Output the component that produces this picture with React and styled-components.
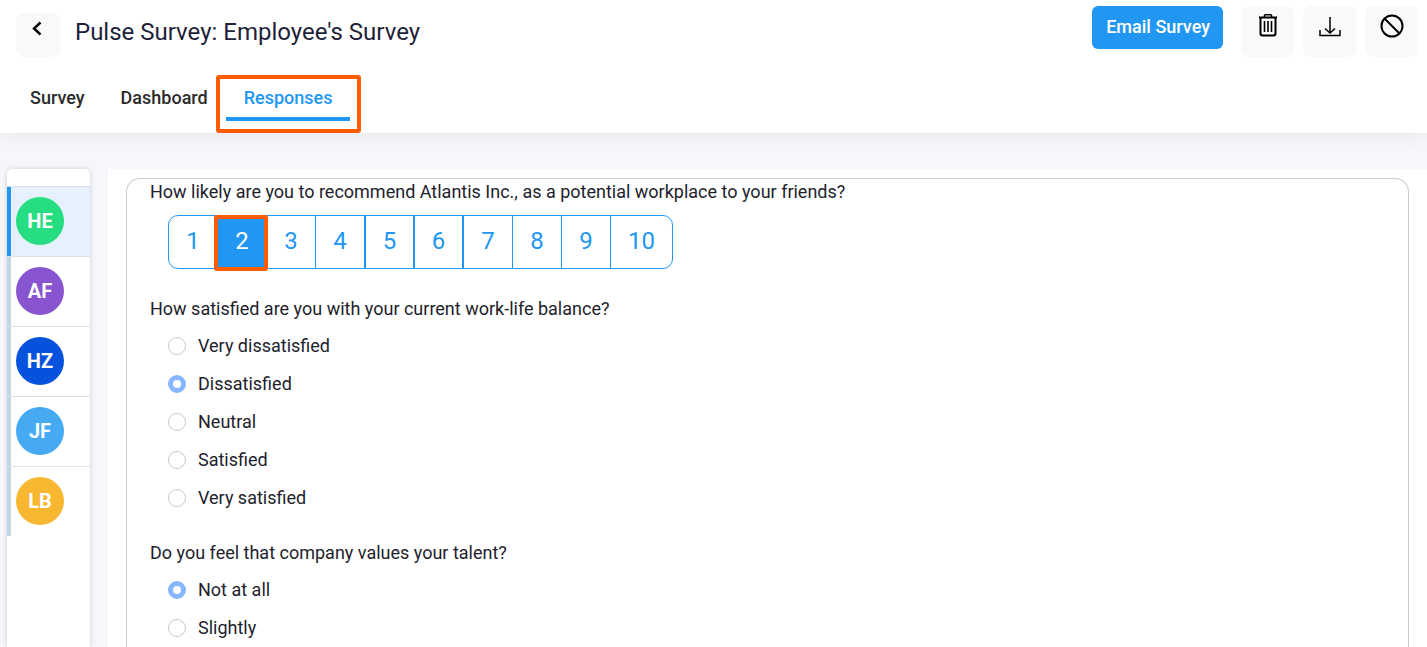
import React, { useState } from 'react';
import styled, { createGlobalStyle } from 'styled-components';

const GlobalStyle = createGlobalStyle`
  * {
    box-sizing: border-box;
  }
  body {
    margin: 0;
    font-family: Roboto, 'Liberation Sans', sans-serif;
    font-size: 18px;
    color: #1e1e2d;
    background-color: #f6f7fb;
  }
  button {
    font-family: inherit;
    border: 0;
    padding: 0;
    cursor: pointer;
  }
`

const Styles = {
  Page: styled.div`
    display: flex;
    flex-direction: column;
    height: 100vh;
    overflow: hidden;
  `,
  Header: styled.header`
    position: relative;
    flex: none;
    background-color: #fff;
    box-shadow: 0 4px 14px rgba(60, 66, 87, 0.07);
  `,
  TitleRow: styled.div`
    display: flex;
    align-items: flex-start;
    padding: 6px 9px 0 16px;
    h1 {
      flex: 1;
      margin: 12px 0 0 15px;
      font-size: 24px;
      line-height: 28px;
      font-weight: 400;
      color: #1f1f3a;
    }
  `,
  BackButton: styled.button`
    display: flex;
    justify-content: center;
    width: 44px;
    height: 44px;
    margin-top: 7px;
    padding: 8px 2px 0 0;
    border-radius: 8px;
    background-color: #f8f9fb;
  `,
  Actions: styled.div`
    display: flex;
    align-items: flex-start;
    gap: 9px;
  `,
  EmailButton: styled.button`
    height: 43px;
    margin-right: 9px;
    padding: 0 13px 2px 14px;
    border-radius: 6px;
    font-size: 18px;
    font-weight: 500;
    color: #fff;
    background-color: #2196f3;
  `,
  IconButton: styled.button`
    display: flex;
    justify-content: center;
    width: 53px;
    height: 51px;
    padding: 8px 0 0 1px;
    border-radius: 8px;
    background-color: #f8f9fb;
  `,
  Tabs: styled.nav`
    display: flex;
    padding: 27px 12px 12px;
  `,
  Tab: styled.a`
    position: relative;
    padding: 0 18px 5px;
    border-bottom: 4px solid ${({ $active }) => ($active ? '#2196f3' : 'transparent')};
    line-height: 28px;
    font-weight: 500;
    text-decoration: none;
    color: ${({ $active }) => ($active ? '#2196f3' : '#2b2b2b')};
  `,
  // orange frame drawn around the element to look at
  Highlight: styled.span`
    position: absolute;
    inset: ${({ $inset }) => $inset};
    z-index: 1;
    border: 4px solid #ff5c00;
    border-radius: 3px;
    pointer-events: none;
  `,
  Body: styled.div`
    display: flex;
    flex: 1;
    min-height: 0;
    gap: 18px;
    padding: 36px 0 0 7px;
  `,
  People: styled.aside`
    flex: none;
    width: 83px;
    padding-top: 17px;
    border-radius: 5px 5px 0 0;
    background-color: #fff;
    box-shadow: 0 0 4px rgba(60, 66, 87, 0.25);
  `,
  Person: styled.button`
    display: flex;
    align-items: flex-start;
    width: 100%;
    height: 70px;
    padding: 10px 0 0 9px;
    border-top: 1px solid #d9e2ea;
    background: linear-gradient(${({ $active }) => ($active ? '#2196f3, #2196f3' : '#bfd5e8, #bfd5e8')}) left / 4px 100% no-repeat;
    background-color: ${({ $active }) => ($active ? '#e7f1fe' : '#fff')};
  `,
  Avatar: styled.span`
    width: 48px;
    height: 48px;
    border-radius: 50%;
    font-size: 20px;
    line-height: 48px;
    font-weight: 700;
    text-align: center;
    color: #fff;
    background-color: ${({ $color }) => $color};
  `,
  Panel: styled.main`
    flex: 1;
    min-width: 0;
    padding: 9px 18px 0;
    background-color: #fff;
  `,
  Card: styled.div`
    height: 100%;
    padding: 0 23px;
    border: 1px solid #ccc;
    border-bottom: 0;
    border-radius: 14px 14px 0 0;
    overflow: hidden;
  `,
  Question: styled.section`
    margin-bottom: 24px;
    h2 {
      margin: 0;
      font-size: 18px;
      line-height: 26px;
      font-weight: 400;
    }
  `,
  Rating: styled.div`
    display: grid;
    grid-template-columns: 48fr repeat(5, 49fr) 50fr 49fr 49fr 62fr;
    max-width: 505px;
    height: 54px;
    margin: 10px 0 27px 18px;
    border: 1px solid #2196f3;
    border-radius: 10px;
  `,
  Score: styled.button`
    position: relative;
    padding-bottom: 2px;
    border-left: ${({ $line }) => $line}px solid #2196f3;
    border-radius: ${({ $line }) => ($line ? 0 : '9px 0 0 9px')};
    font-size: 24px;
    color: ${({ $active }) => ($active ? '#fff' : '#2196f3')};
    background-color: ${({ $active }) => ($active ? '#2196f3' : 'transparent')};
  `,
  Options: styled.div`
    margin-top: 4px;
  `,
  Option: styled.label`
    display: flex;
    align-items: center;
    gap: 12px;
    height: 38px;
    padding-left: 18px;
    cursor: pointer;
    input {
      appearance: none;
      width: 18px;
      height: 18px;
      margin: 1px 0 0;
      border: 1px solid #c8c8c8;
      border-radius: 50%;
      background-color: #fff;
    }
    input:checked {
      border: 5px solid #86b7fe;
    }
  `
}

const people = [
  { initials: 'HE', color: '#26de81' },
  { initials: 'AF', color: '#8854d0' },
  { initials: 'HZ', color: '#0652dd' },
  { initials: 'JF', color: '#45aaf2' },
  { initials: 'LB', color: '#f7b731' }
]

const tabs = ['Survey', 'Dashboard', 'Responses']
const scores = [1, 2, 3, 4, 5, 6, 7, 8, 9, 10]

const dividerWidth = (score) => {
  if (score === 1) {
    return 0
  }
  return score > 4 && score < 8 ? 2 : 1
}

// icons
const ChevronIcon = () => (
  <svg width='16' height='16' viewBox='0 0 16 16' fill='none' stroke='#000' strokeWidth='2.4'>
    <path d='M11.5 1.5L5 7.5l6.5 6' />
  </svg>
)

const TrashIcon = () => (
  <svg width='22' height='24' viewBox='0 0 22 24' fill='none' stroke='#000'>
    <path d='M2 3.5h18' strokeWidth='2' />
    <path d='M7.5 3V1.5q0-.7.7-.7h5.600q.7 0 .7.7V3' strokeWidth='1.6' />
    <path d='M3.500 4v15.500q0 2 2 2h11q2 0 2-2V4' strokeWidth='2' />
    <path d='M7.500 7v11M11 7v11M14.500 7v11' strokeWidth='1.6' />
  </svg>
)

const DownloadIcon = () => (
  <svg width='24' height='24' viewBox='0 0 24 24' fill='none' stroke='#000' strokeWidth='1.5'>
    <path d='M12 3v16M7 14.500l5 4.500 5-4.500' />
    <path d='M2 16v5.500h20V16' />
  </svg>
)

const BanIcon = () => (
  <svg width='24' height='24' viewBox='0 0 24 24' fill='none' stroke='#000' strokeWidth='2'>
    <circle cx='12' cy='12' r='10.500' />
    <path d='M4.500 4.500l15 15' />
  </svg>
)

const ChoiceQuestion = ({ id, title, options, initial }) => {
  const [value, setValue] = useState(initial)

  return (
    <Styles.Question role='radiogroup' aria-labelledby={id}>
      <h2 id={id}>{title}</h2>
      <Styles.Options>
        {options.map((option) => (
          <Styles.Option key={option}>
            <input
              type='radio'
              name={id}
              checked={value === option}
              onChange={() => setValue(option)} />
            {option}
          </Styles.Option>
        ))}
      </Styles.Options>
    </Styles.Question>
  )
}

const App = () => {
  const [person, setPerson] = useState('HE')
  const [score, setScore] = useState(2)

  return (
    <Styles.Page>
      <GlobalStyle />
      <Styles.Header>
        <Styles.TitleRow>
          <Styles.BackButton type='button' aria-label='Back'><ChevronIcon /></Styles.BackButton>
          <h1>Pulse Survey: Employee's Survey</h1>
          <Styles.Actions>
            <Styles.EmailButton type='button'>Email Survey</Styles.EmailButton>
            <Styles.IconButton type='button' aria-label='Delete'><TrashIcon /></Styles.IconButton>
            <Styles.IconButton type='button' aria-label='Download'><DownloadIcon /></Styles.IconButton>
            <Styles.IconButton type='button' aria-label='Disable'><BanIcon /></Styles.IconButton>
          </Styles.Actions>
        </Styles.TitleRow>
        <Styles.Tabs>
          {tabs.map((tab) => (
            <Styles.Tab key={tab} href={`#${tab.toLowerCase()}`} $active={tab === 'Responses'}>
              {tab}
              {tab === 'Responses' && <Styles.Highlight $inset='-9px -11px -16px -10px' />}
            </Styles.Tab>
          ))}
        </Styles.Tabs>
      </Styles.Header>

      <Styles.Body>
        <Styles.People>
          {people.map(({ initials, color }) => (
            <Styles.Person
              key={initials}
              type='button'
              $active={initials === person}
              onClick={() => setPerson(initials)}>
              <Styles.Avatar $color={color}>{initials}</Styles.Avatar>
            </Styles.Person>
          ))}
        </Styles.People>

        <Styles.Panel>
          <Styles.Card>
            <Styles.Question>
              <h2>How likely are you to recommend Atlantis Inc., as a potential workplace to your friends?</h2>
              <Styles.Rating>
                {scores.map((value) => (
                  <Styles.Score
                    key={value}
                    type='button'
                    aria-pressed={value === score}
                    $active={value === score}
                    $line={dividerWidth(value)}
                    onClick={() => setScore(value)}>
                    {value}
                    {value === 2 && <Styles.Highlight $inset='-1px -2px -3px -4px' />}
                  </Styles.Score>
                ))}
              </Styles.Rating>
            </Styles.Question>
            <ChoiceQuestion
              id='balance'
              title='How satisfied are you with your current work-life balance?'
              options={['Very dissatisfied', 'Dissatisfied', 'Neutral', 'Satisfied', 'Very satisfied']}
              initial='Dissatisfied' />
            <ChoiceQuestion
              id='talent'
              title='Do you feel that company values your talent?'
              options={['Not at all', 'Slightly']}
              initial='Not at all' />
          </Styles.Card>
        </Styles.Panel>
      </Styles.Body>
    </Styles.Page>
  );
};

export default App;
